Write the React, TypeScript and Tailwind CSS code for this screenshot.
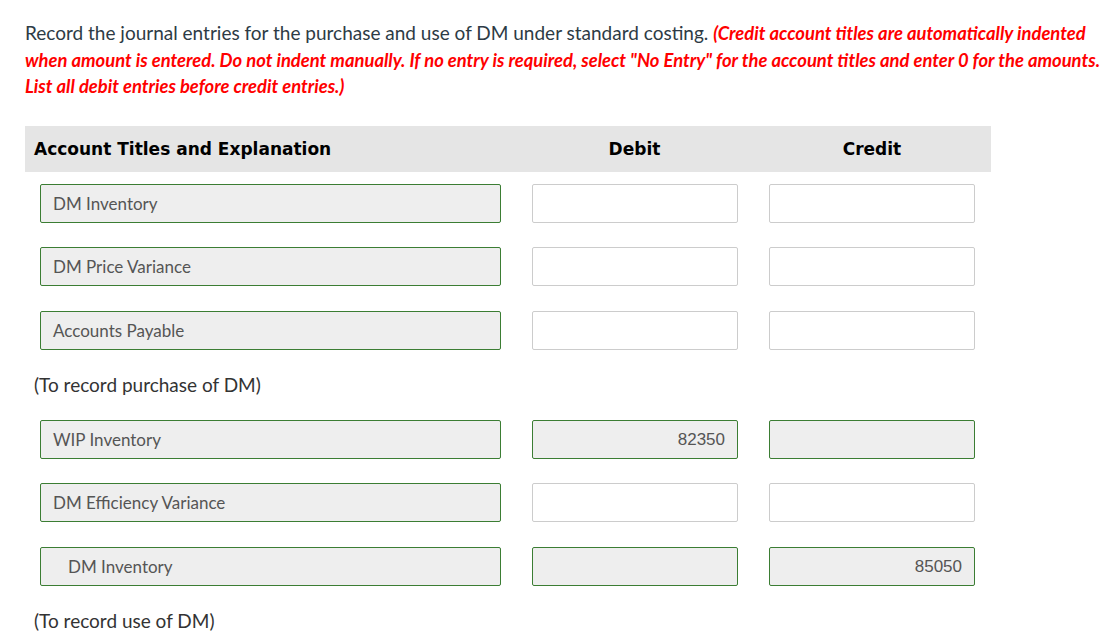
import React from "react";

type Row = {
  account: string;
  indent?: boolean;
  debit?: string;
  credit?: string;
  // filled = field already answered (gray with green border)
  debitFilled?: boolean;
  creditFilled?: boolean;
};

type Block = { rows: Row[]; note: string };

const blocks: Block[] = [
  {
    rows: [
      { account: "DM Inventory" },
      { account: "DM Price Variance" },
      { account: "Accounts Payable" },
    ],
    note: "(To record purchase of DM)",
  },
  {
    rows: [
      { account: "WIP Inventory", debit: "82350", debitFilled: true, creditFilled: true },
      { account: "DM Efficiency Variance" },
      { account: "DM Inventory", indent: true, credit: "85050", debitFilled: true, creditFilled: true },
    ],
    note: "(To record use of DM)",
  },
];

function AmountBox({ value, filled }: { value?: string; filled?: boolean }) {
  return (
    <div
      className={
        filled
          ? "h-[39px] w-[206px] rounded-[2px] border border-[#3b7d33] bg-[#eeeeee] flex items-center justify-end pr-[12px]"
          : "h-[39px] w-[206px] rounded-[2px] border border-[#cccccc] bg-white flex items-center justify-end pr-[12px]"
      }
    >
      <span className="text-[17px] text-[#555555] [font-family:'Liberation_Sans',Arial,sans-serif]">{value}</span>
    </div>
  );
}

function EntryRow({ row }: { row: Row }) {
  return (
    <div className="flex h-[63.5px] items-center">
      <div className="w-[491px] pl-[15px]">
        <div className="h-[39px] w-[461px] rounded-[2px] border border-[#3b7d33] bg-[#eeeeee] flex items-center">
          <span className={row.indent ? "pl-[27px] text-[17px] text-[#555555]" : "pl-[12px] text-[17px] text-[#555555]"}>
            {row.account}
          </span>
        </div>
      </div>
      <div className="w-[237px] pl-[16px]">
        <AmountBox value={row.debit} filled={row.debitFilled} />
      </div>
      <div className="w-[238px] pl-[16px]">
        <AmountBox value={row.credit} filled={row.creditFilled} />
      </div>
    </div>
  );
}

export default function App() {
  return (
    <div className="min-h-screen bg-white pl-[25px] pt-[20px] [font-family:Lato,'Open_Sans',sans-serif]">
      <p className="w-[1085px] text-[19px] leading-[26.5px] text-[#2d3b45]">
        Record the journal entries for the purchase and use of DM under standard costing.{" "}
        <span className="text-[18.4px] font-bold italic text-[#ff0000]">
          (Credit account titles are automatically indented when amount is entered. Do not indent manually. If no
          entry is required, select "No Entry" for the account titles and enter 0 for the amounts. List all debit
          entries before credit entries.)
        </span>
      </p>

      <div className="mt-[26px] w-[966px]">
        <div className="flex h-[46px] items-center pt-[2px] bg-[#e5e5e5] text-[17px] font-bold text-black [font-family:'DejaVu_Sans',Verdana,sans-serif]">
          <div className="w-[491px] pl-[9px]">Account Titles and Explanation</div>
          <div className="w-[237px] text-center">Debit</div>
          <div className="w-[238px] text-center">Credit</div>
        </div>

        {blocks.map((block, i) => (
          <div key={i}>
            {block.rows.map((row, j) => (
              <EntryRow key={j} row={row} />
            ))}
            <div className="flex h-[45.5px] items-center pl-[9px] text-[19px] text-[#333333]">
              {block.note}
            </div>
          </div>
        ))}
      </div>
    </div>
  );
}
